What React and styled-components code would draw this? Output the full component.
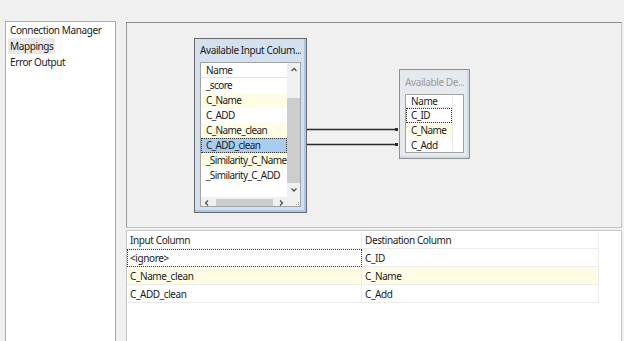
import React from "react";
import styled, { createGlobalStyle, css } from "styled-components";

const Global = createGlobalStyle`
  html, body { margin: 0; padding: 0; background: #f0f0f0; overflow: hidden; }
  body { font-family: "Noto Sans", "Open Sans", sans-serif; font-size: 10px; letter-spacing: -0.4px; color: #1a1a1a; }
  #root { width: 624px; height: 341px; }
`;

const Page = styled.div`
  display: flex;
  gap: 10px;
  padding: 21px 2px 0 5px;
  height: 341px;
  box-sizing: border-box;
  overflow: hidden;
`;

const Sidebar = styled.div`
  width: 111px;
  height: 340px;
  flex: none;
  box-sizing: border-box;
  background: #fff;
  border: 1px solid #a9a9a9;
  padding: 0 2px;
  display: flex;
  flex-direction: column;
  align-items: flex-start;
`;

const NavItem = styled.div`
  height: 16px;
  line-height: 16px;
  padding: 0 2px;
  white-space: nowrap;
  ${(p) => p.$active && css`background: #e8e8e8;`}
`;

const Main = styled.div`
  flex: 1;
  display: flex;
  flex-direction: column;
  gap: 2px;
  padding-top: 1px;
`;

const Canvas = styled.div`
  position: relative;
  height: 206px;
  box-sizing: border-box;
  border: 1px solid #c4c4c4;
  border-top-color: #8c8c8c;
  border-left-color: #9c9c9c;
  background: #f0f0f0;
  flex: none;
`;

const Node = styled.div`
  position: absolute;
  box-sizing: border-box;
  display: flex;
  flex-direction: column;
  padding: 0 5px 5px 5px;
  ${(p) =>
    p.$disabled
      ? css`
          border: 1px solid #8e8e8e;
          background: #e6e9ed;
          box-shadow: inset -2px -2px 0 #d3dbe4;
        `
      : css`
          border: 1px solid #6a6a6a;
          background: #d3e1ef;
          box-shadow: inset -2px -2px 0 #a7c6e8;
        `}
`;

const NodeTitle = styled.div`
  height: ${(p) => p.$h}px;
  line-height: ${(p) => p.$h}px;
  white-space: nowrap;
  overflow: hidden;
  color: ${(p) => (p.$disabled ? "#9a9a9a" : "#1a1a1a")};
`;

const ListBox = styled.div`
  flex: 1;
  border: 1px solid #a3a3a3;
  background: #fff;
  display: grid;
  grid-template-columns: ${(p) => p.$cols};
  grid-template-rows: ${(p) => p.$rows};
  overflow: hidden;
`;

const ListBody = styled.div`
  display: flex;
  flex-direction: column;
  overflow: hidden;
`;

const ListHeader = styled.div`
  height: ${(p) => p.$h}px;
  line-height: ${(p) => p.$h}px;
  padding-left: 5px;
  border-bottom: 1px solid #e3e3e3;
  flex: none;
`;

const ListRow = styled.div`
  height: 15px;
  line-height: 15px;
  padding-left: ${(p) => p.$pad || 6}px;
  box-sizing: border-box;
  white-space: nowrap;
  letter-spacing: -0.6px;
  flex: none;
  background: ${(p) =>
    p.$selected ? "#a8cdf0" : p.$mapped ? "#fffde3" : "#fff"};
  ${(p) =>
    (p.$selected || p.$focus) &&
    css`
      border: 1px dotted #333;
      padding-left: ${(p.$pad || 6) - 1}px;
      line-height: 13px;
    `}
`;

const VScroll = styled.div`
  background: #f0f0f0;
  display: flex;
  flex-direction: column;
  align-items: center;
`;

const ScrollBtn = styled.div`
  width: 12px;
  height: ${(p) => p.$h || 13}px;
  display: flex;
  align-items: center;
  justify-content: center;
  flex: none;
`;

const Track = styled.div`
  flex: 1;
  width: 100%;
  display: flex;
  flex-direction: column;
  padding: ${(p) => p.$pad};
  box-sizing: border-box;
`;

const Thumb = styled.div`
  background: #cdcdcd;
  ${(p) => (p.$vertical ? css`width: 100%; height: 85px;` : css`height: 100%; width: 57px;`)}
`;

const HScroll = styled.div`
  background: #f0f0f0;
  display: flex;
  align-items: center;
`;

const HTrack = styled.div`
  flex: 1;
  height: 100%;
  display: flex;
  padding: 2px 0 2px 3px;
  box-sizing: border-box;
`;

const Corner = styled.div`
  background: #f0f0f0;
  display: flex;
  align-items: flex-end;
  justify-content: flex-end;
`;

const DestBody = styled.div`
  display: flex;
  flex-direction: column;
  background: #fff;
  border-right: 1px solid #ececec;
`;

const Links = styled.svg`
  position: absolute;
  left: 0;
  top: 0;
  pointer-events: none;
`;

const GridPanel = styled.div`
  flex: 1;
  background: #fff;
  border: 1px solid #c6c6c6;
  border-bottom: none;
`;

const Grid = styled.div`
  width: 472px;
  display: grid;
  grid-template-columns: 235px 237px;
`;

const Cell = styled.div`
  height: 18px;
  line-height: 18px;
  padding-left: 3px;
  box-sizing: border-box;
  border-right: 1px solid #ececec;
  border-bottom: 1px solid #ececec;
  white-space: nowrap;
  background: ${(p) => (p.$mapped ? "#fffde6" : "#fff")};
  ${(p) =>
    p.$focus &&
    css`
      border: 1px dotted #3a3a3a;
      line-height: 16px;
      padding-left: 2px;
    `}
`;

const Chevron = ({ dir }) => {
  const pts = {
    up: "1.5,5 4,2.5 6.5,5",
    down: "1.5,2.5 4,5 6.5,2.5",
    left: "5,1.5 2.5,4 5,6.5",
    right: "3,1.5 5.5,4 3,6.5",
  }[dir];
  return (
    <svg width="8" height="8" viewBox="0 0 8 8">
      <polyline points={pts} fill="none" stroke="#505050" strokeWidth="1.3" />
    </svg>
  );
};

const Grip = () => (
  <svg width="8" height="8" viewBox="0 0 8 8">
    {[
      [6, 2],
      [4, 4],
      [6, 4],
      [2, 6],
      [4, 6],
      [6, 6],
    ].map(([x, y], i) => (
      <rect key={i} x={x} y={y} width="1" height="1" fill="#9a9a9a" />
    ))}
  </svg>
);

const inputs = [
  { name: "_score" },
  { name: "C_Name", mapped: true },
  { name: "C_ADD" },
  { name: "C_Name_clean", mapped: true },
  { name: "C_ADD_clean", selected: true },
  { name: "_Similarity_C_Name", mapped: true },
  { name: "_Similarity_C_ADD" },
];

const dests = [
  { name: "C_ID", focus: true },
  { name: "C_Name", mapped: true },
  { name: "C_Add" },
];

const mappings = [
  { input: "<ignore>", dest: "C_ID", focus: true },
  { input: "C_Name_clean", dest: "C_Name", mapped: true },
  { input: "C_ADD_clean", dest: "C_Add" },
];

export default function App() {
  return (
    <>
      <Global />
      <Page>
        <Sidebar>
          <NavItem>Connection Manager</NavItem>
          <NavItem $active>Mappings</NavItem>
          <NavItem>Error Output</NavItem>
        </Sidebar>
        <Main>
          <Canvas>
            <Node style={{ left: 67, top: 15, width: 113, height: 175 }}>
              <NodeTitle $h={23}>Available Input Colum...</NodeTitle>
              <ListBox $cols="1fr 13px" $rows="1fr 11px">
                <ListBody>
                  <ListHeader $h={14}>Name</ListHeader>
                  {inputs.map((r) => (
                    <ListRow key={r.name} $pad={5} $mapped={r.mapped} $selected={r.selected}>
                      {r.name}
                    </ListRow>
                  ))}
                </ListBody>
                <VScroll>
                  <ScrollBtn $h={14}>
                    <Chevron dir="up" />
                  </ScrollBtn>
                  <Track $pad="21px 0 0 0">
                    <Thumb $vertical />
                  </Track>
                  <ScrollBtn $h={14}>
                    <Chevron dir="down" />
                  </ScrollBtn>
                </VScroll>
                <HScroll>
                  <ScrollBtn>
                    <Chevron dir="left" />
                  </ScrollBtn>
                  <HTrack>
                    <Thumb />
                  </HTrack>
                  <ScrollBtn>
                    <Chevron dir="right" />
                  </ScrollBtn>
                </HScroll>
                <Corner>
                  <Grip />
                </Corner>
              </ListBox>
            </Node>

            <Node $disabled style={{ left: 272, top: 46, width: 71, height: 90 }}>
              <NodeTitle $disabled $h={24}>Available De...</NodeTitle>
              <ListBox $cols="47px 1fr" $rows="1fr">
                <DestBody>
                  <ListHeader $h={12}>Name</ListHeader>
                  {dests.map((r) => (
                    <ListRow key={r.name} $pad={5} $mapped={r.mapped} $focus={r.focus}>
                      {r.name}
                    </ListRow>
                  ))}
                </DestBody>
                <div />
              </ListBox>
            </Node>

            <Links width="494" height="204">
              {[106.5, 121.5].map((y) => (
                <g key={y}>
                  <line x1="180" y1={y} x2="270" y2={y} stroke="#2b2b2b" strokeWidth="1.4" />
                  <rect x="268" y={y - 1.5} width="3" height="3" fill="#2b2b2b" />
                </g>
              ))}
            </Links>
          </Canvas>

          <GridPanel>
            <Grid>
              <Cell>Input Column</Cell>
              <Cell>Destination Column</Cell>
              {mappings.map((m) => (
                <React.Fragment key={m.dest}>
                  <Cell $mapped={m.mapped} $focus={m.focus}>
                    {m.input}
                  </Cell>
                  <Cell $mapped={m.mapped}>{m.dest}</Cell>
                </React.Fragment>
              ))}
            </Grid>
          </GridPanel>
        </Main>
      </Page>
    </>
  );
}
